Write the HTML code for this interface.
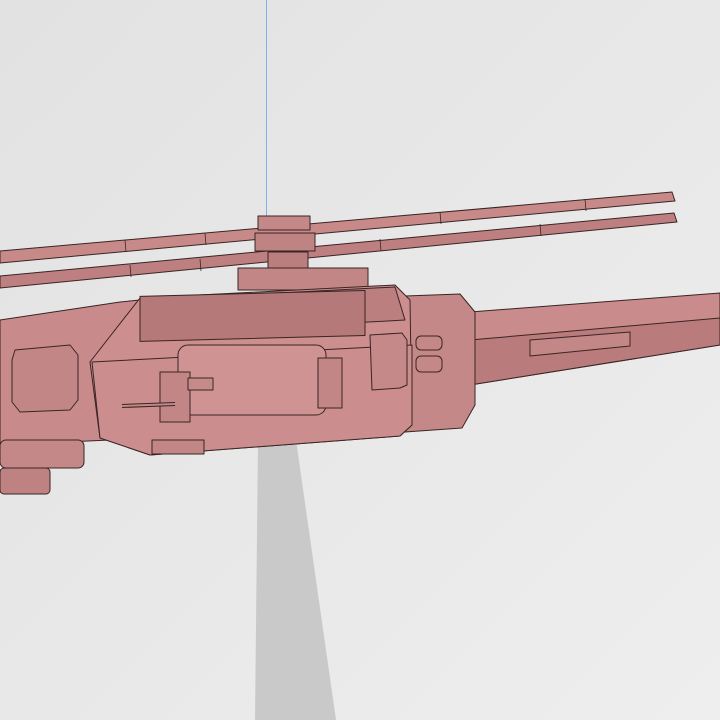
<!DOCTYPE html>
<html><head><style>
html,body{margin:0;padding:0;width:720px;height:720px;overflow:hidden;background:#e6e6e6}
</style></head><body>
<svg width="720" height="720" viewBox="0 0 720 720" xmlns="http://www.w3.org/2000/svg">
<defs>
<linearGradient id="bg" x1="0" y1="0" x2="1" y2="1">
<stop offset="0" stop-color="#e2e2e2"/><stop offset="1" stop-color="#eeeeee"/>
</linearGradient>
</defs>
<rect width="720" height="720" fill="url(#bg)"/>
<line x1="266.5" y1="0" x2="266.5" y2="230" stroke="#7fb2e8" stroke-width="1"/>
<polygon points="258,440 296,440 336,720 255,720" fill="#c9c9c9"/>
<g stroke="#3a2525" stroke-width="1" stroke-linejoin="round">
<polygon points="0,251 672,192 675,201 0,263" fill="#c88989"/>
<polygon points="0,276 674,213 677,222 0,288" fill="#bd7f7f"/>
<g stroke-width="0.8">
<line x1="125" y1="240" x2="126" y2="252"/><line x1="205" y1="233" x2="206" y2="245"/>
<line x1="440" y1="212" x2="441" y2="224"/><line x1="585" y1="199" x2="586" y2="211"/>
<line x1="130" y1="265" x2="131" y2="277"/><line x1="200" y1="259" x2="201" y2="271"/>
<line x1="380" y1="239" x2="381" y2="251"/><line x1="540" y1="224" x2="541" y2="236"/>
</g>
<rect x="258" y="216" width="52" height="14" fill="#c58888"/>
<rect x="255" y="233" width="60" height="18" fill="#c08383"/>
<rect x="268" y="252" width="40" height="30" fill="#bb7e7e"/>
<rect x="238" y="268" width="130" height="22" fill="#c38686"/>
<polygon points="470,312 720,293 720,345 470,385" fill="#c98b8b"/>
<polygon points="470,340 720,318 720,345 470,385" fill="#b97b7b"/>
<polygon points="530,340 630,332 630,346 530,356" fill="#c48787"/>
<polygon points="405,296 460,294 475,312 475,405 462,428 405,432" fill="#c58888"/>
<polygon points="0,320 120,302 140,300 110,440 0,445" fill="#c88a8a"/>
<polygon points="15,350 70,345 78,355 78,400 70,410 20,412 12,402 12,360" fill="#c38686"/>
<rect x="0" y="440" width="84" height="28" rx="6" fill="#c58888"/>
<rect x="0" y="468" width="50" height="26" rx="4" fill="#bf8282"/>
<polygon points="140,298 395,285 410,300 412,425 400,436 150,455 100,438 90,362" fill="#cc8e8e"/>
<polygon points="140,300 395,287 405,320 140,335" fill="#bb7f7f"/>
<rect x="140" y="300" width="225" height="45" fill="#b57979" transform="skewY(-1.5)"/>
<polygon points="92,362 412,345 412,425 400,436 150,455 100,438" fill="#cb8d8d"/>
<rect x="178" y="345" width="148" height="70" rx="10" fill="#d09393"/>
<rect x="160" y="372" width="30" height="50" fill="#c38686"/>
<rect x="318" y="358" width="24" height="50" fill="#c38686"/>
<rect x="188" y="378" width="25" height="12" fill="#c78a8a"/>
<line x1="122" y1="406" x2="175" y2="404" stroke-width="4"/>
<line x1="122" y1="406" x2="175" y2="404" stroke="#c58888" stroke-width="2"/>
<polygon points="370,335 402,333 407,340 407,385 400,388 372,390" fill="#c68989"/>
<rect x="416" y="336" width="26" height="14" rx="5" fill="#c58888"/>
<rect x="416" y="356" width="26" height="16" rx="5" fill="#c58888"/>
<rect x="152" y="440" width="52" height="14" fill="#c38686"/>
</g>
</svg>
</body></html>
